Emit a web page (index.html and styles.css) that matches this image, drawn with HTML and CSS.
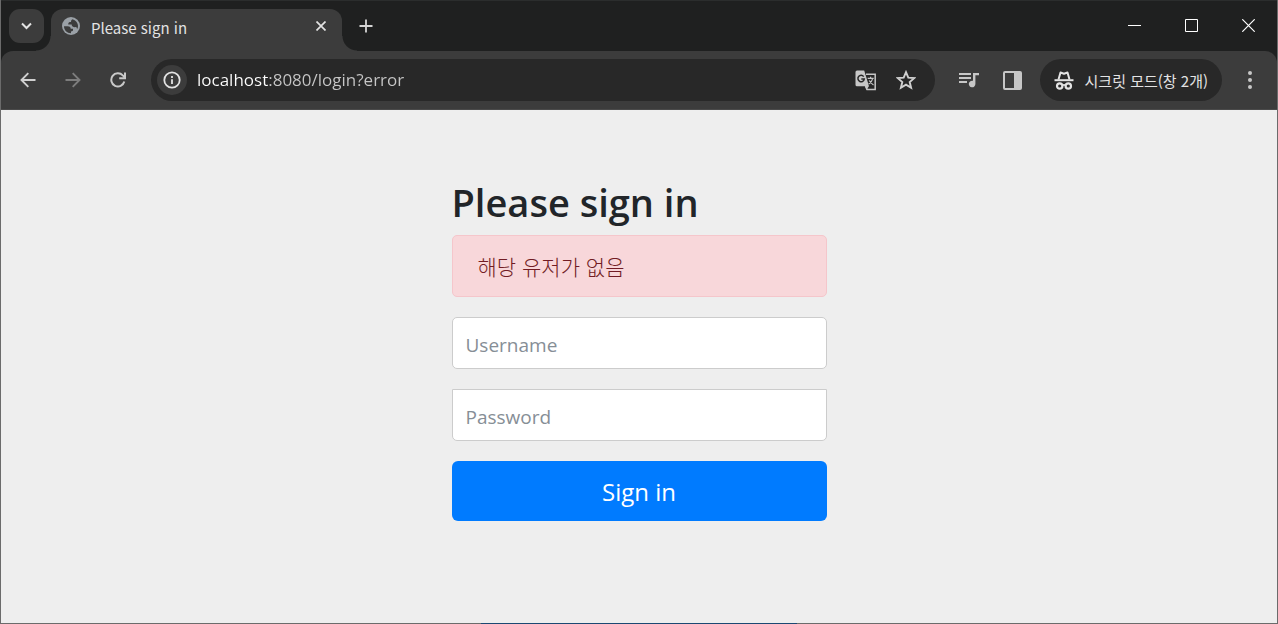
FILE: index.html
```
<!DOCTYPE html>
<html lang="ko">
<head>
    <meta charset="utf-8">
    <meta name="viewport" content="width=device-width, initial-scale=1">
    <title>Please sign in</title>
    <link rel="stylesheet" href="styles.css">
</head>
<body>
    <div class="window">
        <header class="tab-strip">
            <button type="button" class="tab-search" aria-label="Search tabs">
                <svg width="11" height="8" viewBox="0 0 11 8" fill="none" stroke="#e3e3e3" stroke-width="2"><path d="M1 1.500L5.500 6 10 1.500"/></svg>
            </button>
            <div class="tab">
                <svg class="favicon" width="18" height="18" viewBox="0 0 18 18">
                    <circle cx="9" cy="9" r="9" fill="#9aa0a6"/>
                    <path fill="#3c3c3c" d="M2 9.200h3.500c2.500 0 3.200 1 3.200 2.500H11v1.600c0 .9-.8 1-2 1.200v1.700C5 16.200 2 13 2 9.200zM10.500 2.200c3.200.8 5.500 3.600 5.500 6.800 0 1.100-.2 2-.6 2.800-.6-.6-1-.9-1-1.800-2.800.5-4.700-.4-4.700-2.500H6.200C6.200 5.500 7 5 9 5c0-1.500.4-2.300 1.500-2.800z"/>
                </svg>
                <span class="tab-title">Please sign in</span>
                <button type="button" class="tab-close" aria-label="Close tab">
                    <svg width="10" height="10" viewBox="0 0 10 10" stroke="#e3e3e3" stroke-width="1.700"><path d="M.5.5l9 9M9.500.5l-9 9"/></svg>
                </button>
            </div>
            <button type="button" class="new-tab" aria-label="New tab">
                <svg width="14" height="14" viewBox="0 0 14 14" stroke="#d5d5d5" stroke-width="1.800"><path d="M7 .5v13M.5 7h13"/></svg>
            </button>
            <div class="window-buttons">
                <button type="button" aria-label="Minimize">
                    <svg width="13" height="13" viewBox="0 0 13 13" stroke="#fff"><path d="M0 6.500h13"/></svg>
                </button>
                <button type="button" aria-label="Maximize">
                    <svg width="13" height="13" viewBox="0 0 13 13" stroke="#fff" fill="none"><path d="M.5.5h12v12H.5z"/></svg>
                </button>
                <button type="button" aria-label="Close">
                    <svg width="13" height="13" viewBox="0 0 13 13" stroke="#fff" stroke-width="1.200"><path d="M.3.3l12.400 12.400M12.700.3L.3 12.700"/></svg>
                </button>
            </div>
        </header>

        <nav class="toolbar">
            <button type="button" class="nav-button" aria-label="Back">
                <svg width="16" height="16" viewBox="0 0 16 16" fill="none" stroke="#d0d0d0" stroke-width="1.900"><path d="M15.500 8H1.800M8.300 1.200L1.500 8l6.800 6.800"/></svg>
            </button>
            <button type="button" class="nav-button" aria-label="Forward" disabled>
                <svg width="16" height="16" viewBox="0 0 16 16" fill="none" stroke="#7d7d7d" stroke-width="1.900"><path d="M.5 8h13.700M7.700 1.200L14.500 8l-6.800 6.800"/></svg>
            </button>
            <button type="button" class="nav-button" aria-label="Reload">
                <svg width="16" height="16" viewBox="0 0 16 16" fill="none" stroke="#c9c9c9" stroke-width="2"><path d="M14.300 9.500A6.600 6.600 0 1 1 12.800 3.400L15 5.700"/><path d="M15 .4v5.900H9.200"/></svg>
            </button>

            <div class="address-bar">
                <button type="button" class="site-info" aria-label="Site information">
                    <svg width="18" height="18" viewBox="0 0 18 18" fill="none" stroke="#e3e3e3" stroke-width="1.800"><circle cx="9" cy="9" r="7.700"/><path d="M9 8.200v4.800M9 5v1.900"/></svg>
                </button>
                <input type="text" class="url" aria-label="Address" value="localhost:8080/login?error">
                <button type="button" class="bar-button" aria-label="Translate">
                    <svg width="22" height="21" viewBox="0 0 22 21">
                        <path fill="none" stroke="#c7c7c7" stroke-width="1.500" d="M11 4.300h9.200v15.200h-8.200l-1.500-3.500"/>
                        <path fill="#c7c7c7" d="M2 .5h7.200l4.800 15.700H2A1.500 1.500 0 0 1 .5 14.700V2A1.500 1.500 0 0 1 2 .5zM10 16h4l-2.500 4z"/>
                        <path fill="none" stroke="#282828" stroke-width="1.500" d="M8.700 6.600A3.200 3.200 0 1 0 9.300 9H6.300"/>
                        <path fill="none" stroke="#c7c7c7" stroke-width="1.200" d="M12.700 8.300h6M15.600 6.800v1.500M17.700 8.500c-.5 2.500-2.200 4.300-4 5.500M14.300 10.500c1 1.800 2.500 3.300 4.200 4.500"/>
                    </svg>
                </button>
                <button type="button" class="bar-button" aria-label="Bookmark this tab">
                    <svg width="20" height="20" viewBox="0 0 20 20" fill="none" stroke="#d0d0d0" stroke-width="1.900"><path d="M10 2.200l2.300 5.400 5.900.5-4.500 3.900 1.400 5.700-5.100-3-5.100 3 1.400-5.700-4.500-3.900 5.900-.5z"/></svg>
                </button>
            </div>

            <button type="button" class="tool-button" aria-label="Media controls">
                <svg width="20" height="16" viewBox="0 0 20 16" fill="#c7c7c7"><path d="M0 1h12v2H0zM0 5h12v2H0zM0 9h8v2H0zM14 1h6v2.200h-3.600V12a3.300 3.300 0 1 1-2.400-3.200z"/></svg>
            </button>
            <button type="button" class="tool-button" aria-label="Side panel">
                <svg width="19" height="19" viewBox="0 0 19 19"><path fill="none" stroke="#c7c7c7" stroke-width="2" d="M2 1h15a1 1 0 0 1 1 1v15a1 1 0 0 1-1 1H2a1 1 0 0 1-1-1V2a1 1 0 0 1 1-1z"/><path fill="#c7c7c7" d="M11 1h7v17h-7z"/></svg>
            </button>
            <button type="button" class="incognito">
                <svg width="20" height="19" viewBox="0 0 20 19" fill="none" stroke="#e3e3e3">
                    <path stroke-width="2" d="M.5 9.200h19"/>
                    <path stroke-width="2" stroke-linejoin="round" d="M4.500 8.500l2-7L10 2.700l3.500-1.200 2 7"/>
                    <circle cx="5.700" cy="15" r="2.700" stroke-width="2.200"/><circle cx="14.300" cy="15" r="2.700" stroke-width="2.200"/>
                    <path stroke-width="1.800" d="M8.300 14.300q1.700-1 3.400 0"/>
                </svg>
                <span>시크릿 모드(창 2개)</span>
            </button>
            <button type="button" class="menu-button" aria-label="Menu">
                <svg width="4" height="18" viewBox="0 0 4 18" fill="#c7c7c7"><circle cx="2" cy="2" r="2"/><circle cx="2" cy="9" r="2"/><circle cx="2" cy="16" r="2"/></svg>
            </button>
        </nav>

        <main class="page">
            <form class="form-signin">
                <h2>Please sign in</h2>
                <div class="alert" role="alert">해당 유저가 없음</div>
                <input type="text" id="username" class="form-control" aria-label="Username" placeholder="Username" required>
                <input type="password" id="password" class="form-control" aria-label="Password" placeholder="Password" required>
                <button type="submit" class="btn-primary">Sign in</button>
            </form>
        </main>
        <div class="window-edge"></div>
    </div>
</body>
</html>
```
FILE: styles.css
```
* {
    box-sizing: border-box;
}

body {
    margin: 0;
    background-color: #eee;
    font-family: "Open Sans", "Noto Sans CJK KR", sans-serif;
}

button {
    display: flex;
    align-items: center;
    justify-content: center;
    flex-shrink: 0;
    padding: 0;
    border: none;
    background: none;
    font-family: inherit;
    cursor: pointer;
}

.window {
    display: flex;
    flex-direction: column;
    min-height: 100vh;
    border-left: 1px solid #6b6b6b;
    border-right: 1px solid #6b6b6b;
    background-color: #1f2020;
}

/* Tab strip */
.tab-strip {
    display: flex;
    align-items: flex-start;
    height: 51px;
    padding: 8px 0 0 8px;
    border-top: 1px solid #2b2d2d;
}

.tab-search {
    width: 35px;
    height: 34px;
    border-radius: 11px;
    background-color: #3c3c3c;
}

.tab {
    position: relative;
    display: flex;
    align-items: center;
    width: 291px;
    height: 42px;
    margin-left: 7px;
    padding: 0 16px 8px 11px;
    border-radius: 12px 12px 0 0;
    background-color: #3c3c3c;
}

/* Curved feet of the active tab */
.tab::before,
.tab::after {
    content: "";
    position: absolute;
    bottom: 0;
    width: 15px;
    height: 15px;
}

.tab::before {
    left: -15px;
    background: radial-gradient(circle at 0 0, transparent 14px, #3c3c3c 15px);
}

.tab::after {
    right: -15px;
    background: radial-gradient(circle at 100% 0, transparent 14px, #3c3c3c 15px);
}

.tab-title {
    flex: 1;
    margin-left: 11px;
    padding-top: 4px;
    color: #e3e3e3;
    font-family: "Noto Sans CJK KR", sans-serif;
    font-size: 15px;
    line-height: 20px;
}

.new-tab {
    height: 34px;
    margin-left: 17px;
}

.window-buttons {
    display: flex;
    gap: 44px;
    height: 33px;
    margin-left: auto;
    padding-right: 22px;
}

/* Toolbar */
.toolbar {
    display: flex;
    align-items: center;
    height: 59px;
    padding: 0 25px 0 11px;
    border-bottom: 1px solid #4a4a4a;
    border-radius: 12px 12px 0 0;
    background-color: #3c3c3c;
}

.nav-button {
    width: 32px;
    height: 32px;
    margin-right: 13px;
}

.address-bar {
    display: flex;
    align-items: center;
    flex: 1;
    height: 42px;
    margin-left: 4px;
    padding: 0 19px 0 6px;
    border-radius: 21px;
    background-color: #282828;
}

.site-info {
    width: 30px;
    height: 30px;
    border-radius: 50%;
    background-color: #3c3c3c;
}

/* Host part is brighter than the rest of the address */
.url {
    flex: 1;
    min-width: 0;
    margin-left: 10px;
    padding: 0;
    border: none;
    outline: none;
    background: linear-gradient(to right, #fff 72px, #c7c7c7 72px);
    -webkit-background-clip: text;
    background-clip: text;
    color: transparent;
    font-family: inherit;
    font-size: 17px;
    line-height: 24px;
}

.bar-button + .bar-button {
    margin-left: 19px;
}

.tool-button {
    margin-left: 24px;
}

.incognito {
    gap: 11px;
    height: 42px;
    margin-left: 18px;
    padding: 0 14px;
    border-radius: 21px;
    background-color: #282828;
    color: #e3e3e3;
    font-family: "Noto Sans CJK KR", sans-serif;
    font-size: 15px;
}

.menu-button {
    margin-left: 26px;
}

/* Sign-in page */
.page {
    flex: 1;
    padding: 67px 15px 50px;
    background-color: #eee;
}

.form-signin {
    display: flex;
    flex-direction: column;
    gap: 20px;
    max-width: 375px;
    margin: 0 auto;
}

.form-signin h2 {
    margin: 0 0 -12px;
    color: #212529;
    font-size: 38px;
    font-weight: 600;
    line-height: 50px;
}

.alert {
    padding: 15px 25px;
    border: 1px solid #f5c6cb;
    border-radius: 5px;
    background-color: #f8d7da;
    color: #721c24;
    font-family: "Noto Sans CJK KR", sans-serif;
    font-size: 21px;
    font-weight: 300;
    line-height: 30px;
}

.form-control {
    width: 100%;
    height: 52px;
    padding: 4px 13px 0;
    border: 1px solid #ccc;
    border-radius: 5px;
    background-color: #fff;
    color: #495057;
    font-family: inherit;
    font-size: 19px;
}

#password {
    border-radius: 0 0 5px 5px;
}

.form-control::placeholder {
    color: #868e96;
}

.btn-primary {
    width: 100%;
    height: 60px;
    border-radius: 6px;
    background-color: #007bff;
    color: #fff;
    font-size: 24px;
}

/* Bottom edge of the window, with a darker middle */
.window-edge {
    height: 1px;
    background: linear-gradient(#1b4872, #1b4872) center / 316px 1px no-repeat #6b6b6b;
}
```
